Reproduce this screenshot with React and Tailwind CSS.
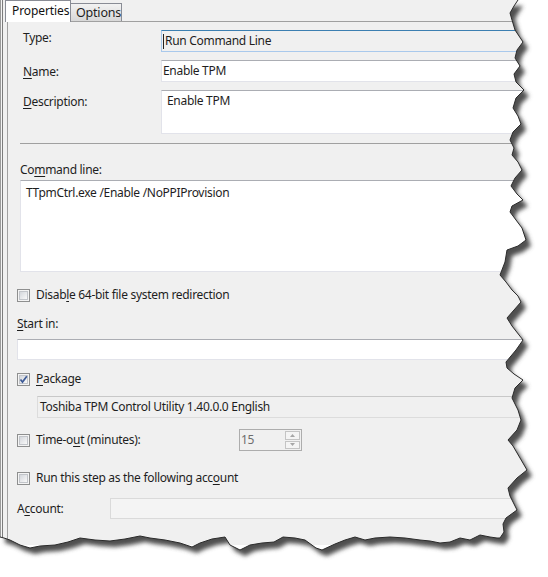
import React from 'react';

const rightEdge = [
  [518, 0], [514, 6], [510, 13], [512, 20], [515, 30], [519, 36], [523, 42], [517, 50], [515, 58], [520, 66],
  [514, 74], [516, 82], [524, 90], [516, 98], [513, 108], [518, 116], [521, 124], [513, 132], [510, 140],
  [514, 148], [512, 155], [518, 162], [522, 170], [515, 178], [511, 186], [517, 194], [523, 200], [512, 206],
  [510, 212], [516, 220], [522, 228], [526, 240], [518, 246], [507, 250], [505, 262], [500, 275], [506, 282],
  [512, 290], [518, 296], [521, 302], [514, 310], [507, 318], [512, 326], [523, 340], [516, 350], [506, 362],
  [507, 368], [514, 374], [523, 380], [515, 388], [512, 398], [518, 410], [521, 420], [517, 430], [508, 440],
  [513, 446], [520, 458], [527, 470], [517, 478], [508, 488], [510, 496], [517, 510], [506, 518], [503, 524],
  [504, 532], [500, 538],
];

const bottomEdge = [
  [497, 538], [490, 537], [480, 535], [470, 540], [460, 538], [450, 542], [440, 543], [430, 541], [420, 540],
  [405, 538], [390, 537], [375, 538], [365, 540], [355, 537], [345, 540], [335, 544], [322, 550], [316, 548],
  [305, 540], [295, 538], [283, 537], [274, 542], [262, 543], [250, 545], [240, 550], [230, 545], [225, 537],
  [212, 539], [200, 543], [192, 547], [180, 543], [165, 540], [150, 538], [140, 536], [125, 539], [110, 541],
  [95, 540], [80, 538], [68, 542], [55, 545], [40, 546], [30, 548], [20, 545], [10, 540], [4, 538], [0, 537],
];

const edge = [...rightEdge, ...bottomEdge];
const edgePath = 'M' + edge.map(p => p.join(',')).join(' L');
const windowPath = 'M0,0 ' + edge.map(p => 'L' + p.join(',')).join(' ') + ' Z';

function TornEdge() {
  return (
    <svg className="absolute inset-0 pointer-events-none" width="548" height="577" viewBox="0 0 548 577">
      <defs>
        <mask id="outside">
          <rect width="548" height="577" fill="white" />
          <path d={windowPath} fill="black" />
        </mask>
        <filter id="blur" x="-10%" y="-10%" width="120%" height="120%">
          <feGaussianBlur stdDeviation="2.2" />
        </filter>
      </defs>
      <g mask="url(#outside)">
        <rect width="548" height="577" fill="white" />
        <path d={windowPath} transform="translate(5,6)" fill="#505050" filter="url(#blur)" />
      </g>
      <path d={edgePath} fill="none" stroke="#2b2b2b" strokeWidth="1" />
    </svg>
  );
}

function Checkbox({ checked }) {
  return (
    <span className="relative w-[13px] h-[13px] shrink-0 border border-[#8e8f8f] bg-[#f4f4f4] p-[1px]">
      <span className="block w-full h-full border border-[#c2c5ca] bg-gradient-to-br from-[#d4d7dc] to-[#f9f9f9]" />
      {checked && (
        <svg className="absolute left-[1px] top-[1px]" width="9" height="9" viewBox="0 0 9 9">
          <path d="M1.5 4.5 L3.5 7 L7.8 1.2" fill="none" stroke="#3d5a96" strokeWidth="1.7" />
        </svg>
      )}
    </span>
  );
}

function U({ children }) {
  return <span className="underline underline-offset-[2px] decoration-1">{children}</span>;
}

const field = 'border border-[#e2e3ea] border-t-[#abadb3] bg-white';

export default function App() {
  return (
    <div className="relative w-[548px] h-[577px] overflow-hidden bg-white text-[12px] tracking-[-0.3px] leading-4 text-[#1e1e1e] font-['Noto_Sans',sans-serif]">
      <div className="flex w-[580px] h-[545px] bg-[#f0f0f0]">
        <div className="w-px bg-[#9a9a9a]" />
        <div className="w-px bg-[#f4f4f4]" />
        <div className="w-px bg-[#7c7c7c]" />
        <div className="w-[2px]" />
        <div className="flex-1 flex flex-col">
          <div className="flex h-[21px] items-start">
            <div className="relative z-10 w-[66px] h-[22px] border border-b-0 border-[#898c95] bg-white pl-[6px] pt-[2px] text-[12px] tracking-[-0.1px] text-[#111]">
              Properties
            </div>
            <div className="mt-[3px] w-[51px] h-[18px] border border-l-0 border-b-0 border-[#898c95] bg-gradient-to-b from-[#f2f2f2] to-[#d8d8d8] pl-[5px] text-[12.5px] tracking-[-0.2px] leading-[17px]">
              Options
            </div>
          </div>
          <div className="ml-[2px] flex-1 border-l border-t border-[#a0a0a0] flex flex-col">
            <div className="mt-[8px] flex pl-[15px]">
              <div className="w-[138px]">Type:</div>
              <div className="flex-1 h-[22px] border border-[#a9c9ec] border-t-[#3c7fb1] bg-[#f0f0f0] flex items-center pl-[1px]">
                <span className="w-px h-[15px] bg-[#222] mr-px" />Run Command Line
              </div>
            </div>
            <div className="mt-[8px] flex pl-[15px]">
              <div className="w-[138px] pt-[4px]"><U>N</U>ame:</div>
              <div className={`flex-1 h-[22px] ${field} flex items-center pl-[1px]`}>Enable TPM</div>
            </div>
            <div className="mt-[8px] flex pl-[15px]">
              <div className="w-[138px] pt-[4px]"><U>D</U>escription:</div>
              <div className={`flex-1 h-[44px] ${field} pl-[5px] pt-[2px]`}>Enable TPM</div>
            </div>
            <div className="mt-[9px] ml-[12px] h-px bg-[#a0a0a0]" />
            <div className="mt-[18px] pl-[12px]">Co<U>m</U>mand line:</div>
            <div className={`mt-[2px] ml-[12px] h-[92px] ${field} pl-[5px] pt-[4px]`}>
              TTpmCtrl.exe /Enable /NoPPIProvision
            </div>
            <div className="mt-[15px] pl-[9px] h-4 flex items-center gap-[6px]">
              <Checkbox />
              <span>Disab<U>l</U>e 64-bit file system redirection</span>
            </div>
            <div className="mt-[13px] pl-[9px]"><U>S</U>tart in:</div>
            <div className={`mt-[7px] ml-[9px] h-[21px] ${field}`} />
            <div className="mt-[11px] pl-[9px] h-4 flex items-center gap-[6px]">
              <Checkbox checked />
              <span><U>P</U>ackage</span>
            </div>
            <div className="mt-[9px] ml-[29px] h-[22px] border border-[#dcdcdc] border-t-[#c8c8c8] bg-[#f0f0f0] flex items-center pl-[2px]">
              Toshiba TPM Control Utility 1.40.0.0 English
            </div>
            <div className="mt-[11px] pl-[9px] h-[22px] flex items-center">
              <div className="w-[222px] flex items-center gap-[6px]">
                <Checkbox />
                <span>Time-o<U>u</U>t (minutes):</span>
              </div>
              <div className="w-[63px] h-[22px] border border-[#adadad] bg-[#f0f0f0] flex items-center">
                <span className="flex-1 pl-[1px] text-[#6d6d6d]">15</span>
                <div className="w-[15px] h-[18px] mr-[1px] flex flex-col gap-px">
                  <div className="flex-1 border border-[#c4c4c4] bg-[#f4f4f4] flex items-center justify-center">
                    <svg width="5" height="3" viewBox="0 0 5 3"><path d="M0 3 L2.5 0 L5 3 Z" fill="#a6a6a6" /></svg>
                  </div>
                  <div className="flex-1 border border-[#c4c4c4] bg-[#f4f4f4] flex items-center justify-center">
                    <svg width="5" height="3" viewBox="0 0 5 3"><path d="M0 0 L2.5 3 L5 0 Z" fill="#a6a6a6" /></svg>
                  </div>
                </div>
              </div>
            </div>
            <div className="mt-[19px] pl-[9px] h-4 flex items-center gap-[6px]">
              <Checkbox />
              <span>Run this step as the following acc<U>o</U>unt</span>
            </div>
            <div className="mt-[12px] pl-[9px] h-[21px] flex items-center">
              <div className="w-[93px]">A<U>c</U>count:</div>
              <div className="flex-1 h-[21px] border border-[#dadada] bg-[#f4f4f4]" />
            </div>
          </div>
        </div>
      </div>
      <TornEdge />
    </div>
  );
}
